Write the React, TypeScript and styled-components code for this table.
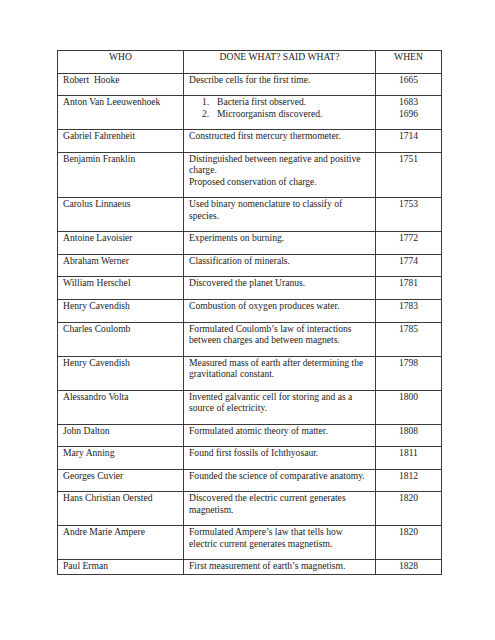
import React from "react";
import styled, { createGlobalStyle } from "styled-components";

const GlobalStyle = createGlobalStyle`
  html, body {
    margin: 0;
    padding: 0;
    background: #ffffff;
  }
`;

const Page = styled.div`
  width: 495px;
  height: 640px;
  padding: 50px 0 0 57px;
  box-sizing: border-box;
  background: #ffffff;
  font-family: "Liberation Serif", "Times New Roman", serif;
  font-size: 9.6px;
  line-height: 11.4px;
  color: #1c1c1c;
`;

const Table = styled.table`
  width: 384px;
  border-collapse: collapse;
  table-layout: fixed;
`;

const HeadCell = styled.th`
  font-weight: normal;
  text-align: center;
  vertical-align: top;
  border: 1px solid #3a3a3a;
  padding: 0 5px 10.2px;
`;

const Cell = styled.td<{ $center?: boolean; $last?: boolean }>`
  text-align: ${(p) => (p.$center ? "center" : "left")};
  vertical-align: top;
  border: 1px solid #3a3a3a;
  padding: 0 5px ${(p) => (p.$last ? "2.6px" : "10.2px")};
  white-space: nowrap;
`;

const NumList = styled.div`
  display: flex;
  flex-direction: column;
  padding-left: 13px;
`;

const NumItem = styled.div`
  display: flex;
`;

const NumMark = styled.span`
  width: 15px;
  flex: none;
`;

type Row = {
  who: string;
  what: string[];
  when: string[];
  list?: boolean;
};

const rows: Row[] = [
  { who: "Robert\u00a0 Hooke", what: ["Describe cells for the first time."], when: ["1665"] },
  {
    who: "Anton Van Leeuwenhoek",
    what: ["Bacteria first observed.", "Microorganism discovered."],
    when: ["1683", "1696"],
    list: true,
  },
  { who: "Gabriel Fahrenheit", what: ["Constructed first mercury thermometer."], when: ["1714"] },
  {
    who: "Benjamin Franklin",
    what: ["Distinguished between negative and positive", "charge.", "Proposed conservation of charge."],
    when: ["1751"],
  },
  {
    who: "Carolus Linnaeus",
    what: ["Used binary nomenclature to classify of", "species."],
    when: ["1753"],
  },
  { who: "Antoine Lavoisier", what: ["Experiments on burning."], when: ["1772"] },
  { who: "Abraham Werner", what: ["Classification of minerals."], when: ["1774"] },
  { who: "William Herschel", what: ["Discovered the planet Uranus."], when: ["1781"] },
  { who: "Henry Cavendish", what: ["Combustion of oxygen produces water."], when: ["1783"] },
  {
    who: "Charles Coulomb",
    what: ["Formulated Coulomb\u2019s law of interactions", "between charges and between magnets."],
    when: ["1785"],
  },
  {
    who: "Henry Cavendish",
    what: ["Measured mass of earth after determining the", "gravitational constant."],
    when: ["1798"],
  },
  {
    who: "Alessandro Volta",
    what: ["Invented galvantic cell for storing and as a", "source of electricity."],
    when: ["1800"],
  },
  { who: "John Dalton", what: ["Formulated atomic theory of matter."], when: ["1808"] },
  { who: "Mary Anning", what: ["Found first fossils of Ichthyosaur."], when: ["1811"] },
  { who: "Georges Cuvier", what: ["Founded the science of comparative anatomy."], when: ["1812"] },
  {
    who: "Hans Christian Oersted",
    what: ["Discovered the electric current generates", "magnetism."],
    when: ["1820"],
  },
  {
    who: "Andre Marie Ampere",
    what: ["Formulated Ampere\u2019s law that tells how", "electric current generates magnetism."],
    when: ["1820"],
  },
  { who: "Paul Erman", what: ["First measurement of earth\u2019s magnetism."], when: ["1828"] },
];

const Lines = ({ items }: { items: string[] }) => (
  <>
    {items.map((t, i) => (
      <React.Fragment key={i}>
        {i > 0 && <br />}
        {t}
      </React.Fragment>
    ))}
  </>
);

const App = () => {
  return (
    <Page>
      <GlobalStyle />
      <Table>
        <colgroup>
          <col style={{ width: 126 }} />
          <col style={{ width: 192 }} />
          <col style={{ width: 66 }} />
        </colgroup>
        <thead>
          <tr>
            <HeadCell>WHO</HeadCell>
            <HeadCell>DONE WHAT? SAID WHAT?</HeadCell>
            <HeadCell>WHEN</HeadCell>
          </tr>
        </thead>
        <tbody>
          {rows.map((r, i) => {
            const last = i === rows.length - 1;
            return (
              <tr key={i}>
                <Cell $last={last}>{r.who}</Cell>
                <Cell $last={last}>
                  {r.list ? (
                    <NumList>
                      {r.what.map((t, j) => (
                        <NumItem key={j}>
                          <NumMark>{j + 1}.</NumMark>
                          {t}
                        </NumItem>
                      ))}
                    </NumList>
                  ) : (
                    <Lines items={r.what} />
                  )}
                </Cell>
                <Cell $center $last={last}>
                  <Lines items={r.when} />
                </Cell>
              </tr>
            );
          })}
        </tbody>
      </Table>
    </Page>
  );
};

export default App;
